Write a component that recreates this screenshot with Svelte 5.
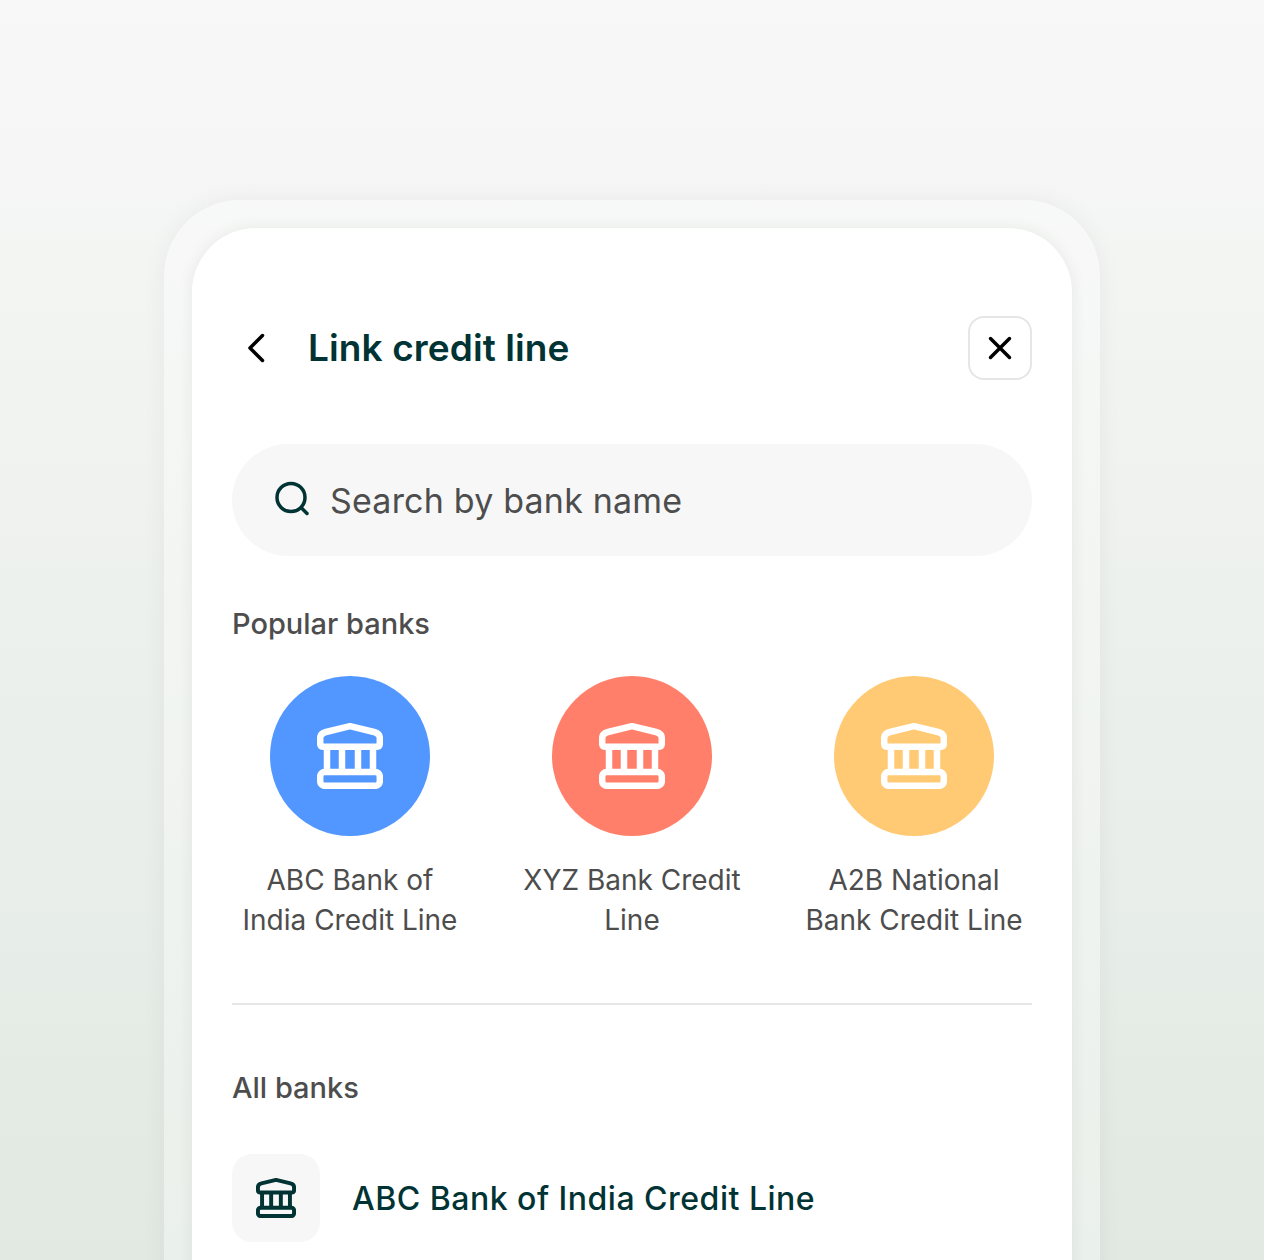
<script>
  const popular = [
    { name: 'ABC Bank of India Credit Line', color: '#5297ff' },
    { name: 'XYZ Bank Credit Line', color: '#ff7f6b' },
    { name: 'A2B National Bank Credit Line', color: '#ffca73' }
  ];
</script>

{#snippet bank(size)}
  <svg width={size} height={size} viewBox="0 0 66 66" fill="none" stroke="currentColor" stroke-width="6.500" stroke-linejoin="round">
    <path d="M33 3.200 9 9C5.200 10 3.200 12 3.200 15v5.300c0 2.400 1.300 3.500 3.600 3.500h52.400c2.300 0 3.600-1.100 3.600-3.500V15c0-3-2-5-5.800-6Z" />
    <path d="M10 24v25M25 24v25M41 24v25M56 24v25" />
    <rect x="3.200" y="49" width="59.600" height="13.800" rx="4.500" />
  </svg>
{/snippet}

<div class="page">
  <div class="shell">
    <div class="sheet">
      <header class="head">
        <button class="back" aria-label="Back">
          <svg width="20" height="32" viewBox="0 0 20 32" fill="none" stroke="#000" stroke-width="3.500" stroke-linecap="round" stroke-linejoin="round">
            <path d="M16.500 3.500 4 16l12.500 12.500" />
          </svg>
        </button>
        <h1>Link credit line</h1>
        <button class="close" aria-label="Close">
          <svg width="28" height="28" viewBox="0 0 28 28" fill="none" stroke="#000" stroke-width="3.500" stroke-linecap="round">
            <path d="M4.500 4.500l19 19M23.500 4.500l-19 19" />
          </svg>
        </button>
      </header>

      <div class="search">
        <svg width="40" height="40" viewBox="0 0 40 40" fill="none" stroke="#003333" stroke-width="3.500" stroke-linecap="round">
          <circle cx="19" cy="18.500" r="14" />
          <path d="M29.500 29l5.500 5.500" />
        </svg>
        <span>Search by bank name</span>
      </div>

      <h2 class="label first">Popular banks</h2>
      <div class="popular">
        {#each popular as b}
          <div class="tile">
            <div class="disc" style="background:{b.color}">{@render bank(66)}</div>
            <p>{b.name}</p>
          </div>
        {/each}
      </div>

      <hr />

      <h2 class="label">All banks</h2>
      <div class="row">
        <div class="thumb">{@render bank(40)}</div>
        <span>ABC Bank of India Credit Line</span>
      </div>
    </div>
  </div>
</div>

<style>
  :global(body) { margin: 0; }
  .page {
    height: 1260px;
    overflow: hidden;
    box-sizing: border-box;
    padding-top: 200px;
    background: linear-gradient(180deg, #f8f8f8 0%, #e1e9e2 100%);
    font-family: Inter, "Liberation Sans", sans-serif;
  }
  .shell {
    width: 936px;
    margin: 0 auto;
    box-sizing: border-box;
    padding: 28px 28px 0;
    border-radius: 76px 76px 0 0;
    background: rgba(255, 255, 255, 0.32);
    box-shadow: 0 0 24px rgba(0, 40, 30, 0.05);
    height: 1100px;
  }
  .sheet {
    background: #fff;
    border-radius: 64px 64px 0 0;
    padding: 88px 40px 0;
    height: 1072px;
    box-shadow: 0 0 16px rgba(0, 40, 30, 0.07);
  }
  .head { display: flex; align-items: center; height: 64px; }
  .back {
    width: 48px;
    height: 48px;
    padding: 0;
    border: 0;
    background: none;
    display: flex;
    align-items: center;
    justify-content: center;
    margin-right: 28px;
  }
  h1 {
    margin: -2px 0 0;
    flex: 1;
    font-size: 37px;
    font-weight: 600;
    letter-spacing: 0.1px;
    color: #003333;
  }
  .close {
    width: 64px;
    height: 64px;
    padding: 0;
    box-sizing: border-box;
    background: #fff;
    border: 2px solid #e6e6e6;
    border-radius: 16px;
    display: flex;
    align-items: center;
    justify-content: center;
  }
  .search {
    margin-top: 64px;
    height: 112px;
    border-radius: 56px;
    background: #f7f7f7;
    display: flex;
    align-items: center;
    gap: 18px;
    padding-left: 40px;
    font-size: 34px;
    letter-spacing: 0.2px;
    color: #4d4d4d;
  }
  .search svg { margin-top: -2px; }
  .label {
    margin: 48px 0 0;
    font-size: 29px;
    line-height: 40px;
    font-weight: 500;
    color: #4d4d4d;
  }
  .popular {
    margin-top: 32px;
    display: grid;
    grid-template-columns: repeat(3, 236px);
    gap: 46px;
  }
  .tile { text-align: center; }
  .disc {
    width: 160px;
    height: 160px;
    border-radius: 50%;
    margin: 0 auto;
    color: #fff;
    display: flex;
    align-items: center;
    justify-content: center;
  }
  .tile p {
    margin: 24px 8px 0;
    font-size: 28px;
    line-height: 40px;
    color: #4d4d4d;
  }
  hr {
    margin: 63px 0 0;
    border: 0;
    height: 2px;
    background: #e6e6e6;
  }
  hr + .label { margin-top: 63px; }
  .row {
    margin-top: 46px;
    display: flex;
    align-items: center;
    gap: 32px;
    font-size: 32px;
    letter-spacing: 0.5px;
    font-weight: 500;
    color: #003333;
  }
  .thumb {
    width: 88px;
    height: 88px;
    border-radius: 20px;
    background: #f7f7f7;
    display: flex;
    align-items: center;
    justify-content: center;
  }
</style>
